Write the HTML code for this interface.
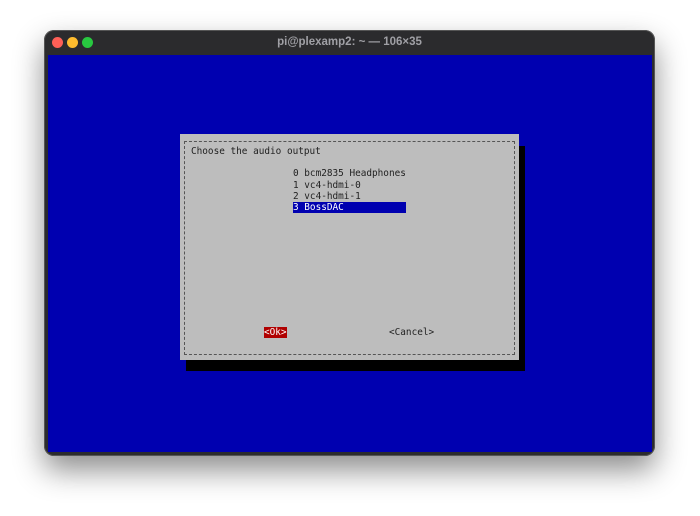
<!DOCTYPE html>
<html><head><style>
html,body{margin:0;padding:0;background:#fff;width:700px;height:516px;overflow:hidden}
.win{position:absolute;left:44px;top:30px;width:611px;height:426px;background:#2b2b2d;border-radius:10px;box-shadow:0 14px 30px rgba(0,0,0,.45),0 0 0 1px #555 inset}
.title{position:absolute;left:0;top:0;width:611px;height:24px;text-align:center;font:bold 11.5px "Liberation Sans",sans-serif;color:#a0a0a5;line-height:24px}
.dot{position:absolute;top:7px;width:11px;height:11px;border-radius:50%}
.term{position:absolute;left:48px;top:55px;width:604px;height:397px;background:#0000b0}
.sh{position:absolute;left:186px;top:146px;width:339px;height:225px;background:#000}
.dlg{position:absolute;left:180px;top:134px;width:339px;height:226px;background:#bdbdbd}
.inner{position:absolute;left:184px;top:141px;width:331px;height:214px;border:1px dashed #555;box-sizing:border-box}
.t{position:absolute;font:9.4px "DejaVu Sans Mono",monospace;color:#222;white-space:pre;line-height:11px}
</style></head><body>
<div class="win">
<div class="title">pi@plexamp2: ~ — 106×35</div>
<div class="dot" style="left:8px;background:#fe5f57"></div>
<div class="dot" style="left:23px;background:#febc2e"></div>
<div class="dot" style="left:38px;background:#28c840"></div>
</div>
<div class="term"></div>
<div class="sh"></div>
<div class="dlg"></div>
<div class="inner"></div>
<div class="t" style="left:191px;top:146px">Choose the audio output</div>
<div class="t" style="left:293px;top:168px">0 bcm2835 Headphones</div>
<div class="t" style="left:293px;top:180px">1 vc4-hdmi-0</div>
<div class="t" style="left:293px;top:191px">2 vc4-hdmi-1</div>
<div class="t" style="left:293px;top:202px;width:113px;background:#0000b0;color:#fff">3 BossDAC</div>
<div class="t" style="left:264px;top:327px;width:23px;background:#b00000;color:#fff">&lt;Ok&gt;</div>
<div class="t" style="left:389px;top:327px">&lt;Cancel&gt;</div>
</body></html>
